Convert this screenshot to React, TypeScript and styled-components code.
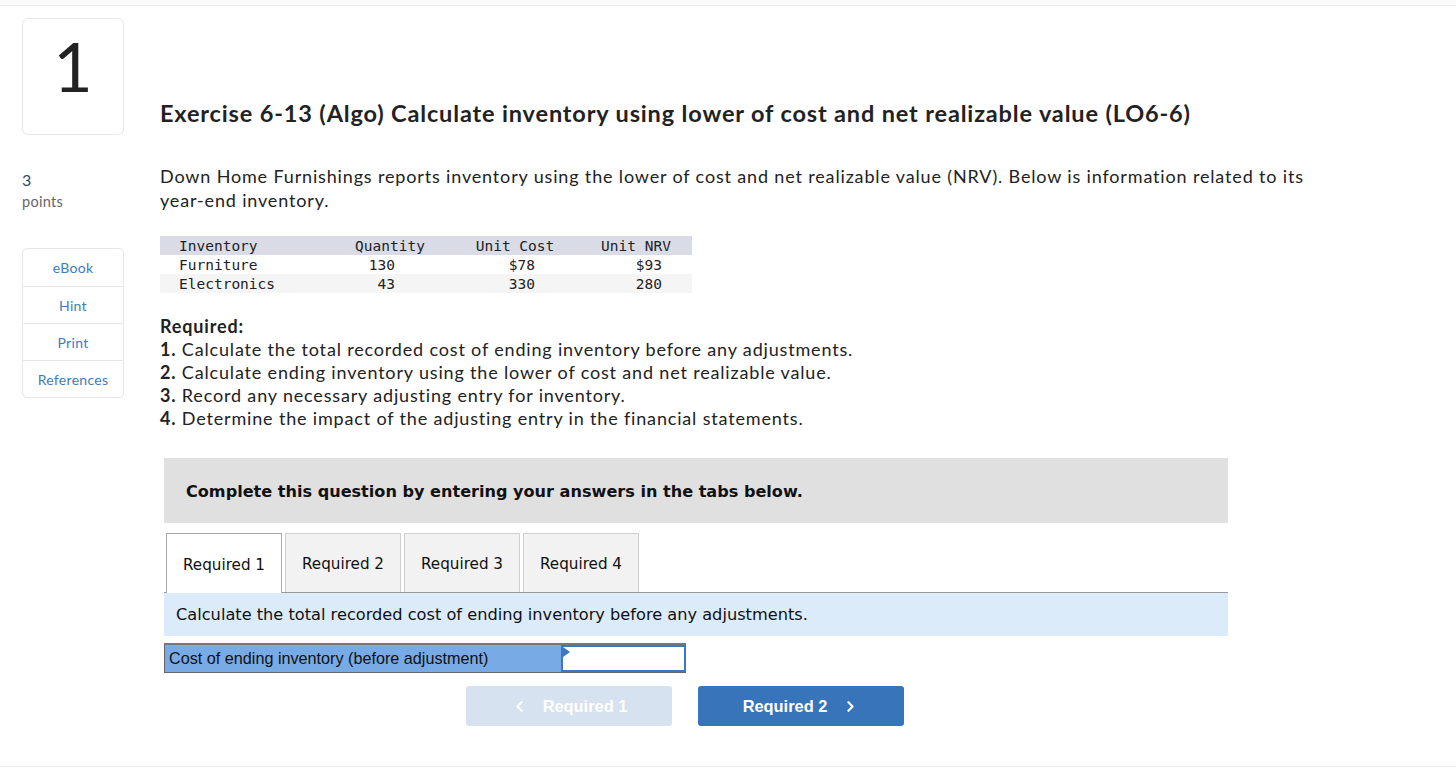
import React from "react";
import styled, { createGlobalStyle } from "styled-components";
import { ChevronLeft, ChevronRight } from "lucide-react";

const Global = createGlobalStyle`
  html, body { margin: 0; padding: 0; background: #fff; }
  body { font-family: "Lato", "Open Sans", sans-serif; color: #222; }
  * { box-sizing: border-box; }
`;

const TopBar = styled.div`
  height: 6px;
  background: #fafafa;
  border-bottom: 1px solid #ececec;
`;

const Page = styled.div`
  display: grid;
  grid-template-columns: 102px 1fr;
  column-gap: 36px;
  padding: 12px 0 40px 22px;
  min-height: 760px;
  border-bottom: 1px solid #ececec;
`;

const LeftCol = styled.div`
  display: flex;
  flex-direction: column;
`;

const NumberCard = styled.div`
  height: 117px;
  border: 1px solid #e8e8e8;
  border-radius: 6px;
  display: flex;
  align-items: center;
  justify-content: center;
  font-family: "Lato", sans-serif;
  font-size: 68px;
  font-weight: 400;
  color: #222;
  padding-bottom: 22px;
`;

const Points = styled.div`
  margin-top: 35px;
  font-size: 16px;
  line-height: 20px;
  color: #2c4a70;
`;

const PointsLabel = styled.div`
  margin-top: 2px;
  font-size: 14.5px;
  line-height: 20px;
  color: #666;
  letter-spacing: 0.3px;
`;

const SideMenu = styled.div`
  margin-top: 36px;
  border: 1px solid #e6e6e6;
  border-radius: 5px;
  display: flex;
  flex-direction: column;
`;

const SideItem = styled.div`
  height: 37px;
  display: flex;
  align-items: center;
  justify-content: center;
  font-size: 14px;
  letter-spacing: 0.3px;
  color: #3c7bc2;
  & + & { border-top: 1px solid #e6e6e6; }
`;

const Content = styled.div`
  width: 1150px;
  display: flex;
  flex-direction: column;
`;

const Title = styled.h1`
  margin: 80px 0 0;
  font-family: "Lato", sans-serif;
  font-size: 23.5px;
  line-height: 30px;
  font-weight: 700;
  letter-spacing: 0.85px;
  color: #222;
`;

const Para = styled.p`
  margin: 36px 0 0;
  font-size: 18px;
  line-height: 24px;
  letter-spacing: 0.84px;
  color: #222;
`;

const DataTable = styled.div`
  margin-top: 24px;
  width: 532px;
  font-family: "DejaVu Sans Mono", monospace;
  font-size: 14.5px;
  color: #222;
`;

const DataRow = styled.div<{ $bg: string }>`
  display: grid;
  grid-template-columns: 180px 100px 150px 102px;
  height: 19px;
  align-items: center;
  background: ${(p) => p.$bg};
`;

const Cell = styled.div<{ $align: string; $pl?: number; $pr?: number }>`
  text-align: ${(p) => p.$align};
  padding-left: ${(p) => p.$pl ?? 0}px;
  padding-right: ${(p) => p.$pr ?? 0}px;
  white-space: pre;
`;

const Required = styled.div`
  margin-top: 22px;
  font-size: 18px;
  line-height: 23px;
  letter-spacing: 0.83px;
  color: #222;
`;

const Bold = styled.b`
  font-weight: 700;
`;

const Question = styled.div`
  margin: 28px 0 0 4px;
  width: 1064px;
  display: flex;
  flex-direction: column;
`;

const Instruction = styled.div`
  height: 65px;
  background: #e0e0e0;
  display: flex;
  align-items: center;
  padding-left: 22px;
  padding-top: 2px;
  font-family: "DejaVu Sans", Verdana, sans-serif;
  font-weight: 700;
  font-size: 16.1px;
  color: #111;
`;

const Tabs = styled.div`
  margin-top: 10px;
  display: flex;
  gap: 3px;
  padding-left: 2px;
  border-bottom: 1px solid #999;
  height: 60px;
`;

const Tab = styled.div<{ $active?: boolean }>`
  width: 116px;
  height: ${(p) => (p.$active ? 60 : 59)}px;
  display: flex;
  align-items: center;
  justify-content: center;
  padding-top: 2px;
  font-family: "DejaVu Sans", Tahoma, sans-serif;
  font-size: 15.2px;
  color: #111;
  background: ${(p) => (p.$active ? "#fff" : "#f2f2f2")};
  border: 1px solid ${(p) => (p.$active ? "#a8a8a8" : "#cfcfcf")};
  border-bottom: none;
`;

const InfoBar = styled.div`
  height: 43px;
  background: #dbebf9;
  display: flex;
  align-items: center;
  padding-left: 12px;
  font-family: "DejaVu Sans", Tahoma, sans-serif;
  font-size: 16.2px;
  color: #111;
`;

const AnswerRow = styled.div`
  margin-top: 7px;
  width: 522px;
  height: 30px;
  display: flex;
  border-top: 2px solid #777;
  border-bottom: 1px solid #666;
`;

const AnswerLabel = styled.div`
  width: 397px;
  background: #78abe6;
  display: flex;
  align-items: center;
  padding-left: 4px;
  font-family: "Liberation Sans", Arial, sans-serif;
  font-size: 16.2px;
  color: #111;
  border-left: 1px solid #666;
`;

const AnswerInputWrap = styled.div`
  position: relative;
  flex: 1;
  background: #fff;
  border: 2px solid #3b78c0;
`;

const Flag = styled.span`
  position: absolute;
  left: 0;
  top: 0;
  width: 0;
  height: 0;
  border-top: 5px solid transparent;
  border-bottom: 5px solid transparent;
  border-left: 7px solid #3b78c0;
`;

const NavRow = styled.div`
  margin-top: 13px;
  display: flex;
  gap: 26px;
  padding-left: 302px;
`;

const NavButton = styled.div<{ $disabled?: boolean }>`
  width: 206px;
  height: 40px;
  border-radius: 3px;
  display: flex;
  align-items: center;
  justify-content: center;
  gap: 15px;
  font-family: "Liberation Sans", Arial, sans-serif;
  font-weight: 700;
  font-size: 16.4px;
  color: #fff;
  background: ${(p) => (p.$disabled ? "#d6e2f0" : "#3874ba")};
`;

const rows: { bg: string; cells: string[] }[] = [
  { bg: "#d9dce6", cells: ["Inventory", "Quantity", "Unit Cost", "Unit NRV"] },
  { bg: "#ffffff", cells: ["Furniture", "130", "$78", "$93"] },
  { bg: "#f5f5f5", cells: ["Electronics", "43", "330", "280"] },
];

export default function App() {
  return (
    <>
      <Global />
      <TopBar />
      <Page>
        <LeftCol>
          <NumberCard>1</NumberCard>
          <Points>3</Points>
          <PointsLabel>points</PointsLabel>
          <SideMenu>
            <SideItem>eBook</SideItem>
            <SideItem>Hint</SideItem>
            <SideItem>Print</SideItem>
            <SideItem>References</SideItem>
          </SideMenu>
        </LeftCol>
        <Content>
          <Title>
            Exercise 6-13 (Algo) Calculate inventory using lower of cost and net realizable value (LO6-6)
          </Title>
          <Para>
            Down Home Furnishings reports inventory using the lower of cost and net realizable value (NRV).
            Below is information related to its year-end inventory.
          </Para>
          <DataTable>
            {rows.map((r, i) => (
              <DataRow key={i} $bg={r.bg}>
                <Cell $align="left" $pl={19}>{r.cells[0]}</Cell>
                {i === 0 ? (
                  <>
                    <Cell $align="center">{r.cells[1]}</Cell>
                    <Cell $align="center">{r.cells[2]}</Cell>
                    <Cell $align="center" $pr={10}>{r.cells[3]}</Cell>
                  </>
                ) : (
                  <>
                    <Cell $align="right" $pr={45}>{r.cells[1]}</Cell>
                    <Cell $align="right" $pr={55}>{r.cells[2]}</Cell>
                    <Cell $align="right" $pr={30}>{r.cells[3]}</Cell>
                  </>
                )}
              </DataRow>
            ))}
          </DataTable>
          <Required>
            <div><Bold>Required:</Bold></div>
            <div><Bold>1.</Bold> Calculate the total recorded cost of ending inventory before any adjustments.</div>
            <div><Bold>2.</Bold> Calculate ending inventory using the lower of cost and net realizable value.</div>
            <div><Bold>3.</Bold> Record any necessary adjusting entry for inventory.</div>
            <div><Bold>4.</Bold> Determine the impact of the adjusting entry in the financial statements.</div>
          </Required>
          <Question>
            <Instruction>Complete this question by entering your answers in the tabs below.</Instruction>
            <Tabs>
              <Tab $active>Required 1</Tab>
              <Tab>Required 2</Tab>
              <Tab>Required 3</Tab>
              <Tab>Required 4</Tab>
            </Tabs>
            <InfoBar>Calculate the total recorded cost of ending inventory before any adjustments.</InfoBar>
            <AnswerRow>
              <AnswerLabel>Cost of ending inventory (before adjustment)</AnswerLabel>
              <AnswerInputWrap>
                <Flag />
              </AnswerInputWrap>
            </AnswerRow>
            <NavRow>
              <NavButton $disabled>
                <ChevronLeft size={17} strokeWidth={3} />
                <span>Required 1</span>
              </NavButton>
              <NavButton>
                <span>Required 2</span>
                <ChevronRight size={17} strokeWidth={3} />
              </NavButton>
            </NavRow>
          </Question>
        </Content>
      </Page>
    </>
  );
}
